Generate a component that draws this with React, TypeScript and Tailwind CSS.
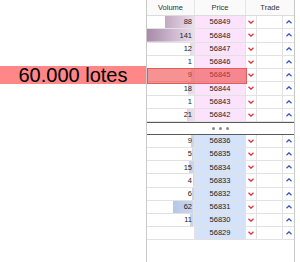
import React from "react";

const upper = [
  { vol: 88, price: 56849 },
  { vol: 141, price: 56848 },
  { vol: 12, price: 56847 },
  { vol: 1, price: 56846 },
  { vol: 9, price: 56845 },
  { vol: 18, price: 56844 },
  { vol: 1, price: 56843 },
  { vol: 21, price: 56842 },
];

const lower = [
  { vol: 9, price: 56836 },
  { vol: 5, price: 56835 },
  { vol: 15, price: 56834 },
  { vol: 4, price: 56833 },
  { vol: 6, price: 56832 },
  { vol: 62, price: 56831 },
  { vol: 11, price: 56830 },
  { vol: 0, price: 56829 },
];

const MAX = 141;

function Down() {
  return (
    <svg width="6" height="4" viewBox="0 0 6 4">
      <polyline points="0.5,0.8 3,3.2 5.5,0.8" fill="none" stroke="#e2303a" strokeWidth="1.3" />
    </svg>
  );
}

function Up() {
  return (
    <svg width="6" height="4" viewBox="0 0 6 4">
      <polyline points="0.5,3.2 3,0.8 5.5,3.2" fill="none" stroke="#3a55c8" strokeWidth="1.3" />
    </svg>
  );
}

function Row({ vol, price, side }: { vol: number; price: number; side: "ask" | "bid" }) {
  const ask = side === "ask";
  return (
    <div className={`flex border-b border-[#e2e2e2] ${ask ? "h-[13.25px]" : "h-[13.125px]"}`}>
      <div className="relative w-[48px] border-r border-[#e2e2e2] flex items-center justify-end pr-[2px]">
        {vol > 0 && (
          // gradient spans the whole column, the bar only shows its right part
          <div
            className={`absolute right-0 top-0 bottom-0 bg-[length:47px_100%] bg-right bg-no-repeat ${
              ask
                ? "bg-gradient-to-r from-[#a88aa8] to-[#ecdfee]"
                : "bg-gradient-to-r from-[#9cb2de] to-[#c9d7f2]"
            }`}
            style={{ width: `${(vol / MAX) * 47}px` }}
          />
        )}
        {vol > 0 && <span className="relative">{vol}</span>}
      </div>
      <div
        className={`w-[51px] flex items-center justify-center border-r border-[#e2e2e2] ${
          ask ? "bg-[#fde2fb]" : "bg-[#d5e3fa]"
        }`}
      >
        {price}
      </div>
      <div className="w-[11px] flex items-center justify-center border-r border-[#e2e2e2]">
        <Down />
      </div>
      <div className="w-[26px] border-r border-[#e2e2e2]" />
      <div className="w-[11px] flex items-center justify-center">
        <Up />
      </div>
    </div>
  );
}

export default function App() {
  return (
    <div
      className="relative w-[300px] h-[262px] bg-white flex overflow-hidden text-[#222]"
      style={{ fontFamily: '"Liberation Sans", Arial, sans-serif' }}
    >
      <div className="w-[146px]" />
      <div className="w-[149px] h-full border-l border-r border-[#c9c9c9] text-[7.5px] leading-none">
        <div className="flex h-[16px] border-b border-[#dcdcdc] bg-[#fafafa] text-[#333]">
          <div className="w-[48px] flex items-center justify-center border-r border-[#e6e6e6]">Volume</div>
          <div className="w-[51px] flex items-center justify-center border-r border-[#e6e6e6]">Price</div>
          <div className="w-[48px] flex items-center justify-center">Trade</div>
        </div>
        {upper.map((r) => (
          <Row key={r.price} {...r} side="ask" />
        ))}
        <div className="h-[13px] border-t border-b border-[#5a5a5a] flex items-center">
          <div className="w-[99px] flex justify-center gap-[4px] pl-[48px]">
            <span className="w-[3px] h-[3px] rounded-full bg-[#8a8a8a]" />
            <span className="w-[3px] h-[3px] rounded-full bg-[#8a8a8a]" />
            <span className="w-[3px] h-[3px] rounded-full bg-[#8a8a8a]" />
          </div>
        </div>
        {lower.map((r) => (
          <Row key={r.price} {...r} side="bid" />
        ))}
      </div>
      <div className="flex-1" />

      {/* annotation overlay */}
      <div className="absolute left-0 top-[66px] w-[146px] h-[18px] bg-[#ff8787] flex items-center justify-center text-[20px] text-black">
        60.000 lotes
      </div>
      <div className="absolute left-[147px] top-[68px] w-[100px] h-[16px] bg-[#f24a4a]/60 border border-[#e25c5c]" />
    </div>
  );
}
